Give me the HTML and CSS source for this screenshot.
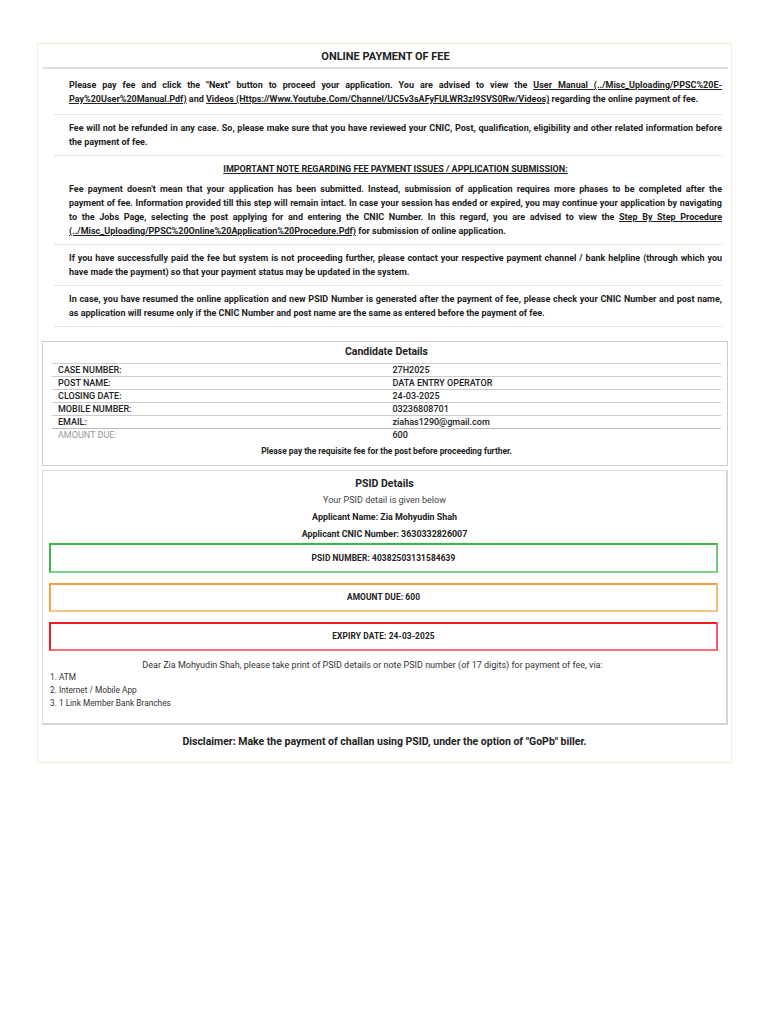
FILE: index.html
```html
<!DOCTYPE html>
<html lang="en">
<head>
<meta charset="UTF-8">
<meta name="viewport" content="width=device-width, initial-scale=1.0">
<title>Online Payment of Fee</title>
<link rel="stylesheet" href="styles.css">
</head>
<body>
  <div class="page">
    <h1 class="page-title">ONLINE PAYMENT OF FEE</h1>

    <div class="notes">
      <p class="note">Please pay fee and click the "Next" button to proceed your application. You are advised to view the <a href="#">User Manual (../Misc_Uploading/PPSC%20E-Pay%20User%20Manual.Pdf)</a> and <a href="#">Videos (Https://Www.Youtube.Com/Channel/UC5v3sAFyFULWR3zI9SVS0Rw/Videos)</a> regarding the online payment of fee.</p>
      <p class="note">Fee will not be refunded in any case. So, please make sure that you have reviewed your CNIC, Post, qualification, eligibility and other related information before the payment of fee.</p>
      <h3 class="note-heading">IMPORTANT NOTE REGARDING FEE PAYMENT ISSUES / APPLICATION SUBMISSION:</h3>
      <p class="note">Fee payment doesn't mean that your application has been submitted. Instead, submission of application requires more phases to be completed after the payment&nbsp;of fee. Information provided till this step will remain intact. In case your session has ended or expired, you may continue your application by navigating to the Jobs Page, selecting the post applying for and entering the CNIC Number. In this regard, you are advised to view the <a href="#">Step By Step Procedure (../Misc_Uploading/PPSC%20Online%20Application%20Procedure.Pdf)</a> for submission of online application.</p>
      <p class="note">If you have successfully paid the fee but system is not proceeding further, please contact your respective payment channel / bank helpline (through which you have made the payment) so that your payment status may be updated in the system.</p>
      <p class="note">In case, you have resumed the online application and new PSID Number is generated after the payment of fee, please check your CNIC Number and post name, as&nbsp;application will resume only if the CNIC Number and post name are the same as entered before the payment of fee.</p>
    </div>

    <div class="panel candidate">
      <h2 class="panel-title">Candidate Details</h2>
      <table class="details">
        <tr><td>CASE NUMBER:</td><td>27H2025</td></tr>
        <tr><td>POST NAME:</td><td>DATA ENTRY OPERATOR</td></tr>
        <tr><td>CLOSING DATE:</td><td>24-03-2025</td></tr>
        <tr><td>MOBILE NUMBER:</td><td>03236808701</td></tr>
        <tr><td>EMAIL:</td><td>ziahas1290@gmail.com</td></tr>
        <tr class="muted"><td>AMOUNT DUE:</td><td>600</td></tr>
      </table>
      <p class="fee-note">Please pay the requisite fee for the post before proceeding further.</p>
    </div>

    <div class="panel psid">
      <h2 class="panel-title">PSID Details</h2>
      <p class="psid-sub">Your PSID detail is given below</p>
      <p class="psid-info">Applicant Name: Zia Mohyudin Shah</p>
      <p class="psid-info">Applicant CNIC Number: 3630332826007</p>

      <div class="psid-box green">PSID NUMBER: 40382503131584639</div>
      <div class="psid-box orange">AMOUNT DUE: 600</div>
      <div class="psid-box red">EXPIRY DATE: 24-03-2025</div>

      <p class="psid-dear">Dear Zia Mohyudin Shah, please take print of PSID details or note PSID number (of 17 digits) for payment of fee, via:</p>
      <ul class="channels">
        <li>1. ATM</li>
        <li>2. Internet / Mobile App</li>
        <li>3. 1 Link Member Bank Branches</li>
      </ul>
    </div>

    <p class="disclaimer">Disclaimer: Make the payment of challan using PSID, under the option of "GoPb" biller.</p>
  </div>
</body>
</html>
```

FILE: styles.css
```css
body {
  margin: 0;
  padding: 0;
  font-family: Roboto, "Liberation Sans", Arial, sans-serif;
  background-color: #fff;
  color: #222;
}
a {
  color: #222;
  text-decoration: underline;
}

.page {
  margin: 43px 0 0 37px;
  width: 693px;
  border: 1px solid #eef0d4;
  padding-bottom: 13px;
}
.page-title {
  margin: 0 0 0 5px;
  width: 685px;
  padding: 6px 0 3px;
  font-size: 11px;
  font-weight: bold;
  line-height: 14px;
  text-align: center;
  border-bottom: 2px solid #ddd;
}

.notes {
  margin: 0 9px 0 17px;
  padding-top: 4px;
}
.note {
  margin: 0;
  padding: 6px 0 6px 14px;
  font-size: 9px;
  font-weight: bold;
  line-height: 14px;
  text-align: justify;
  border-bottom: 1px dotted #ccc;
}
.notes .note:first-child {
  padding-top: 5px;
  padding-bottom: 8px;
}
.note-heading {
  margin: 0;
  padding: 6px 0 0 14px;
  font-size: 9px;
  font-weight: bold;
  line-height: 14px;
  text-align: center;
  text-decoration: underline;
}

.panel {
  margin: 0 3px 0 4px;
  border: 1px solid #ccc;
}
.candidate {
  margin-top: 14px;
  padding: 3px 6px 8px 9px;
}
.panel-title {
  margin: 0;
  font-size: 10.5px;
  font-weight: bold;
  line-height: 14px;
  text-align: center;
}
.details {
  width: 100%;
  border-collapse: collapse;
  margin-top: 4px;
  font-size: 9px;
  font-weight: 500;
}
.details td {
  padding: 0 6px;
  height: 12px;
  line-height: 12px;
  border-top: 1px solid #ccc;
}
.details td:first-child {
  width: 50%;
}
.details .muted td:first-child {
  color: #999;
  font-weight: normal;
}
.details .muted td {
  border-top-color: #bbb;
}
.fee-note {
  margin: 4px 0 0;
  font-size: 8.4px;
  font-weight: bold;
  line-height: 12px;
  text-align: center;
}

.psid {
  margin-top: 4px;
  padding: 6px 0 13px;
  border-color: #ddd;
  border-right: 2px solid #d4d4d4;
  border-bottom: 2px solid #d4d4d4;
}
.psid-sub {
  margin: 2px 0 0;
  font-size: 9px;
  color: #444;
  line-height: 14px;
  text-align: center;
}
.psid-info {
  margin: 3px 0 0;
  font-size: 8.9px;
  font-weight: bold;
  line-height: 14px;
  text-align: center;
}
.psid-box {
  margin: 0 8px 0 6px;
  height: 25px;
  line-height: 25px;
  font-size: 8.4px;
  font-weight: bold;
  letter-spacing: 0.1px;
  text-align: center;
}
.psid-box.green {
  margin-top: 2px;
  height: 26px;
  line-height: 26px;
  border: 2px solid #3cb54a;
  border-bottom-color: #7fd38a;
  border-right-color: #6ccb78;
}
.psid-box.orange {
  margin-top: 10px;
  border: 2px solid #f5a042;
  border-bottom-color: #fbc48a;
  border-right-color: #fab878;
}
.psid-box.red {
  margin-top: 10px;
  margin-bottom: 7px;
  border: 2px solid #ee1c1c;
  border-bottom-color: #f87080;
  border-right-color: #f56070;
}
.psid-dear {
  margin: 0;
  padding-right: 24px;
  font-size: 9px;
  color: #333;
  line-height: 14px;
  text-align: center;
}
.channels {
  list-style: none;
  margin: -1px 0 0;
  padding: 0 0 0 7px;
  font-size: 8.3px;
  color: #333;
}
.channels li {
  line-height: 13px;
}

.disclaimer {
  margin: 10px 0 0;
  font-size: 10.5px;
  font-weight: bold;
  line-height: 14px;
  text-align: center;
}
```
